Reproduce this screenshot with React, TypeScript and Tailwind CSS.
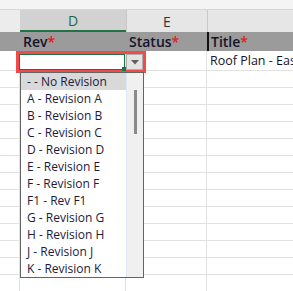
const options = [
  '- - No Revision',
  'A - Revision A',
  'B - Revision B',
  'C - Revision C',
  'D - Revision D',
  'E - Revision E',
  'F - Revision F',
  'F1 - Rev F1',
  'G - Revision G',
  'H - Revision H',
  'J - Revision J',
  'K - Revision K',
];

function GridRow() {
  return (
    <div className="flex h-[17px] border-b border-[#e1e1e1]">
      <div className="w-[20px] shrink-0 border-r border-[#e1e1e1]" />
      <div className="w-[106px] shrink-0 border-r border-[#e1e1e1]" />
      <div className="w-[81px] shrink-0 border-r border-[#e1e1e1]" />
      <div className="flex-1" />
    </div>
  );
}

export default function App() {
  return (
    <div className="relative h-[291px] w-[293px] overflow-hidden bg-white font-['Open_Sans','Liberation_Sans',sans-serif] text-[12px]">
      {/* ribbon edge */}
      <div className="h-[10px] border-b border-[#d6d6d6] bg-[#f4f4f4]" />

      {/* column letters */}
      <div className="flex h-[22px] bg-[#e6e6e6] text-[14px]">
        <div className="w-[20px] shrink-0 bg-[#ececec]" />
        <div className="flex w-[106px] shrink-0 items-center justify-center border-b-2 border-[#217346] bg-[#d2d2d2] text-[#1d6a44]">
          D
        </div>
        <div className="flex w-[81px] shrink-0 items-center justify-center border-l border-[#c8c8c8] text-[#333]">
          E
        </div>
        <div className="flex-1 border-l border-[#c8c8c8]" />
      </div>

      {/* field headers */}
      <div className="flex h-[19px] bg-[#9b9b9b] text-[14px] font-semibold leading-[19px] text-[#14142a]">
        <div className="w-[20px] shrink-0" />
        <div className="w-[106px] shrink-0 pl-[3px]">
          Rev<span className="text-[#e0201c]">*</span>
        </div>
        <div className="w-[81px] shrink-0 pl-[3px]">
          Status<span className="text-[#e0201c]">*</span>
        </div>
        <div className="flex-1 whitespace-nowrap border-l-2 border-[#111] pl-[2px]">
          Title<span className="text-[#e0201c]">*</span>
        </div>
      </div>

      {/* first data row */}
      <div className="flex h-[20px] border-b border-[#e1e1e1] text-[12.5px] leading-[20px] text-[#14142a]">
        <div className="w-[20px] shrink-0" />
        <div className="w-[106px] shrink-0 border-r border-[#e1e1e1]" />
        <div className="w-[81px] shrink-0 border-r border-[#e1e1e1]" />
        <div className="min-w-0 flex-1 overflow-hidden whitespace-nowrap pl-[3px]">Roof Plan - East</div>
      </div>

      {Array.from({ length: 13 }).map((_, i) => (
        <GridRow key={i} />
      ))}

      {/* highlight around the cell editor */}
      <div className="absolute left-[16px] top-[51px] h-[22px] w-[130px] border-[3px] border-[#f24a4a]">
        <div className="flex h-full items-stretch">
          <div className="relative h-full w-[106px] border border-[#217346] bg-white">
            <div className="absolute -bottom-[2px] -right-[2px] h-[4px] w-[4px] bg-[#217346]" />
          </div>
          <div className="ml-[1px] flex flex-1 items-center justify-center border border-[#adadad] bg-[#e3e3e3]">
            <svg width="8" height="5" viewBox="0 0 8 5">
              <path d="M0 0h8L4 4.5z" fill="#5f5f5f" />
            </svg>
          </div>
        </div>
      </div>

      {/* dropdown list */}
      <div className="absolute left-[20px] top-[72px] flex h-[206px] w-[124px] border border-[#646464] bg-white">
        <div className="flex-1 text-[12px] leading-[17px] text-[#1b1b3c]">
          {options.map((o, i) => (
            <div
              key={o}
              className={`h-[17px] whitespace-nowrap pl-[6px] ${i === 0 ? 'bg-[#d9d9d9]' : ''}`}>
              {o}
            </div>
          ))}
        </div>
        <div className="relative w-[17px] shrink-0 border-l border-[#dce9f5] bg-[#f0f0f0]">
          <div className="absolute left-[7px] top-[17px] h-[44px] w-[3px] bg-[#8a8a8a]" />
        </div>
      </div>
    </div>
  );
}
